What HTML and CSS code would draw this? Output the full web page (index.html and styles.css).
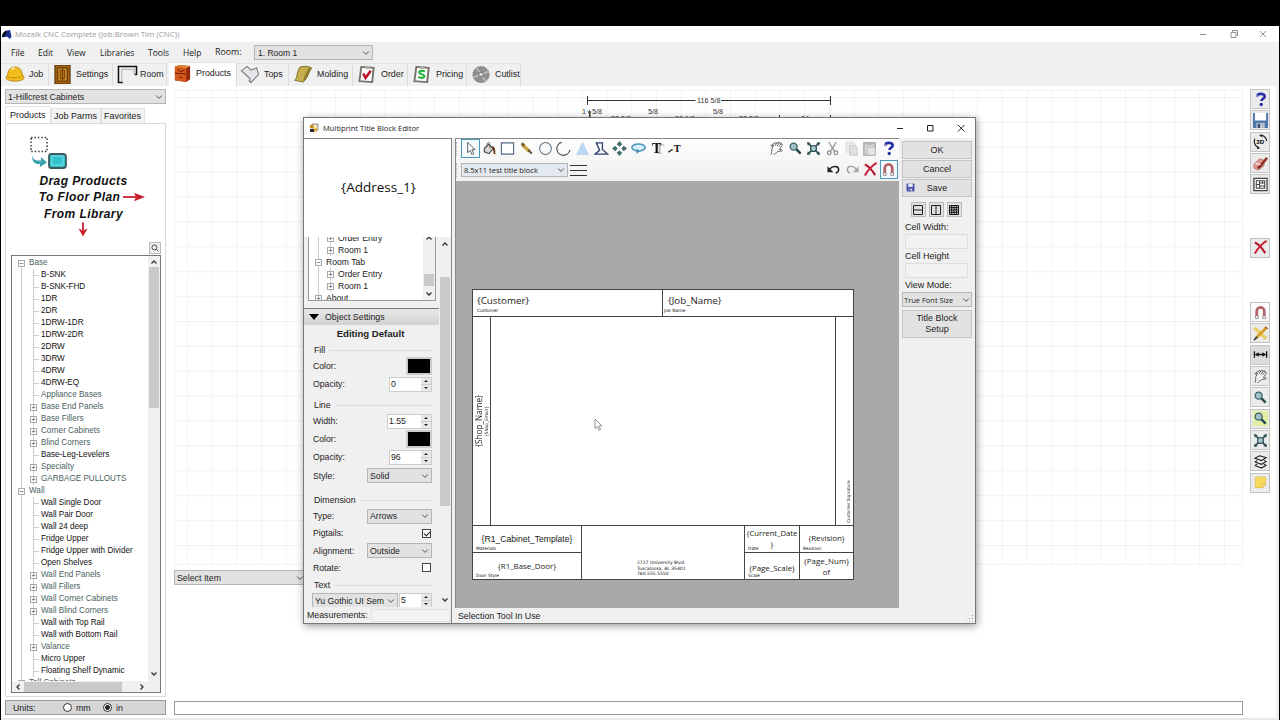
FILE: index.html
```html
<!DOCTYPE html>
<html lang="en">
<head>
    <meta charset="UTF-8">
    <meta name="viewport" content="width=device-width, initial-scale=1.0">
    <title>Mozaik CNC Complete</title>
    <link rel="stylesheet" href="styles.css">
</head>
<body>
    <!-- shared icons -->
    <svg class="defs" width="0" height="0">
        <symbol id="chev" viewBox="0 0 8 8"><path d="M1.2 2.5 4 5.4 6.8 2.5" fill="none" stroke="#555" stroke-width="1"/></symbol>
        <symbol id="arrow" viewBox="0 0 8 8"><path d="M1.5 5.5 4 3 6.5 5.5" fill="none" stroke="#333" stroke-width="1.3"/></symbol>
        <symbol id="help" viewBox="0 0 16 16"><path d="M4.500 4.500C5 2.500 6 2 8 2c3 0 4.500.8 4.500 2.700 0 2.300-3.500 2.300-3.500 4.800" fill="none" stroke="#2b2fa8" stroke-width="2.800"/><path d="M4 5.500 4.500 3" stroke="#8d90e0" stroke-width="2"/><circle cx="8.800" cy="13.300" r="1.800" fill="#2b2fa8"/></symbol>
        <symbol id="magnet" viewBox="0 0 16 16"><path d="M4 14V6.500a4 4 0 0 1 8 0V14" fill="none" stroke="#b5636b" stroke-width="3"/><path d="M2.500 11.500h3v3h-3zM10.500 11.500h3v3h-3z" fill="#f4f4f4" stroke="#777" stroke-width=".7"/></symbol>
        <symbol id="redx" viewBox="0 0 16 16"><path d="M2 2.500C6 4.500 10 9 13 14" fill="none" stroke="#b3162c" stroke-width="2.200"/><path d="M14.500 1C9.500 4 5 9 2 14.500" fill="none" stroke="#c8243a" stroke-width="2.200"/></symbol>
        <symbol id="lens" viewBox="0 0 16 16"><path d="m8.500 8.500 5 5" stroke="#26464d" stroke-width="2.600"/><circle cx="6" cy="6" r="3.700" fill="#9fc3c8" stroke="#3d6169" stroke-width="1.400"/></symbol>
        <symbol id="fit" viewBox="0 0 16 16"><path d="M2 2l12 12M14 2 2 14" stroke="#34545b" stroke-width="1.800"/><path d="M1 1l4 1-3 3zM15 1l-4 1 3 3zM1 15l4-1-3-3zM15 15l-4-1 3-3z" fill="#34545b"/><circle cx="8" cy="8" r="3.200" fill="#a4c5ca" stroke="#34545b" stroke-width="1.300"/></symbol>
        <symbol id="hand" viewBox="0 0 16 16"><path d="M2 14.500C3.500 12 2.500 10 3.200 8L5 4.500 3 5.500c-1 .2-1-.8-.3-1.300L7 1.800c1-.3 1.200.5.6 1L6.500 5M7.600 2.800 9.500 1.500c1-.4 1.400.4.9 1.100L8.500 5.500M10.500 2.600l1.400-.8c1-.2 1.300.7.7 1.300L10.500 6M12.800 3.300c1.200-.5 1.900.5 1.200 1.500L11 9l2.500.3c1.200.6.6 1.600-.5 1.500L9.500 11C8 13 5.500 13.500 5 14.700" fill="#fff" stroke="#444" stroke-width=".9"/></symbol>
        <symbol id="save" viewBox="0 0 16 16"><path d="M1 1h14v14H1z" fill="#4b4fa8"/><path d="M4 1h8v6H4z" fill="#e8eaf8"/><path d="M5 10h6v5H5z" fill="#c7c9e6"/><path d="M6 11h2v4H6z" fill="#33366f"/></symbol>
    </svg>

    <div class="app">
        <div class="titlebar">
            <svg class="logo" viewBox="0 0 12 12"><path d="M2 5 5 2l5-1 .5 3 1 4.500L9.500 11 7 8.500 1 9z" fill="#1d2f91"/><path d="M1 9l1-4 3-3 1.500 1L4 7.500z" fill="#0b0b18"/></svg>
            <span class="title">Mozaik CNC Complete (Job:Brown Tim (CNC))</span>
            <svg class="wc" viewBox="0 0 70 12"><path d="M0 6.500h6M31 4.500h5v5h-5zM32.500 4v-1.500h5v5h-1M60 3l6 6M66 3l-6 6" fill="none" stroke="#888" stroke-width=".9"/></svg>
        </div>

        <div class="menubar">
            <span class="m-file">File</span>
            <span class="m-edit">Edit</span>
            <span class="m-view">View</span>
            <span class="m-lib">Libraries</span>
            <span class="m-tools">Tools</span>
            <span class="m-help">Help</span>
            <span class="m-room">Room:</span>
            <div class="select room-select">1. Room 1<svg><use href="#chev"/></svg></div>
        </div>

        <div class="tabs">
            <div class="tab t-job">
                <svg viewBox="0 0 20 18"><path d="M1 13c0-2 1-2.500 1.500-3C3 4 6 1.500 10 1.500s7 3 7.500 8c1 .5 2 2 1.500 3.500-3 3.500-15 3.500-18 0z" fill="#f2bd1d" stroke="#a8790b" stroke-width=".8"/><path d="M6 4c1-1 3-1.500 4-1" stroke="#fff1a0" stroke-width="1.600" fill="none"/><path d="M2 11c4 2 12 2 16-1" stroke="#c18d10" fill="none"/></svg>
                Job
            </div>
            <div class="tab t-settings">
                <svg viewBox="0 0 18 20"><path d="M1 0h16v20H1z" fill="#a2610f" stroke="#4c2c05"/><path d="M4 3h10v14H4z" fill="#c9861d" stroke="#59340a"/><path d="M7 5.500h4v9H7z" fill="#b8720f" stroke="#6b3d07"/><path d="M9 3v14" stroke="#59340a" stroke-width=".7"/></svg>
                Settings
            </div>
            <div class="tab t-room">
                <svg viewBox="0 0 21 20"><path d="M5.500 18.500H1V1.500h19V10h-2" fill="none" stroke="#111" stroke-width="1.600"/><path d="M4.500 18V4.500h13V10" fill="none" stroke="#aaa" stroke-width="1"/></svg>
                Room
            </div>
            <div class="tab t-products active">
                <svg viewBox="0 0 18 20"><path d="M1 3 5 1l12 1v14l-4 3L1 17z" fill="#8f2b0c"/><path d="M1 3l12 1.500V19L1 17z" fill="#d9571b"/><path d="M1 9.500l12 1.200M4 6l3 2 4-1.500M5 13.500l4 1" stroke="#5d1c06" fill="none"/><path d="M1 3l4-2 12 1-4 2.500z" fill="#e28a3a"/></svg>
                Products
            </div>
            <div class="tab t-tops">
                <svg viewBox="0 0 20 20"><path d="M1 6 7 1.500l4 4L17 3l2 7-8 8.500-2-1.500 1-3z" fill="#e3e5e8" stroke="#777" stroke-width="1.100"/><path d="M1 6.500l8.500 8 1.500 4" fill="none" stroke="#999"/></svg>
                Tops
            </div>
            <div class="tab t-molding">
                <svg viewBox="0 0 20 20"><path d="M7 2c4-1 8-1 12 1-1 3-2 3-3 6s-4 8-6 9L1 16c3-2 2-4 3-7s1-5 3-7z" fill="#c6ae4c" stroke="#6d5c1b" stroke-width=".8"/><path d="M16 3.500c1.500-.3 2.500-.5 3-.5-1 3-2 3-3 6s-4 8-6 9c1-4 1-5 2.500-8S14 6 16 3.500z" fill="#8d792b"/></svg>
                Molding
            </div>
            <div class="tab t-order">
                <svg viewBox="0 0 20 20"><path d="M4 2l13 1-1.500 15L2 17z" fill="#fff" stroke="#77736a" stroke-width="2"/><path d="M8 1h5v3H8z" fill="#aaa"/><path d="M6 9l2.500 4.500L14 6" fill="none" stroke="#b8172d" stroke-width="2.800"/></svg>
                Order
            </div>
            <div class="tab t-pricing">
                <svg viewBox="0 0 20 20"><path d="M4 2l13 1-1.500 15L2 17z" fill="#fff" stroke="#77736a" stroke-width="2"/><path d="M8 1h5v3H8z" fill="#aaa"/><path d="M13 7c-2-1.500-6-1-6 1s6 1.500 5.500 4c-.3 2-4.500 2-6.500.3" fill="none" stroke="#26b03c" stroke-width="2.200"/></svg>
                Pricing
            </div>
            <div class="tab t-cutlist">
                <svg viewBox="0 0 20 20"><circle cx="10" cy="10" r="8.500" fill="#8f8f8f" stroke="#777" stroke-dasharray="2 1"/><path d="M10 10 5 2.500M10 10l8-3M10 10l5 7.500M10 10l-8 3" stroke="#b8b8b8" stroke-width="2"/><circle cx="10" cy="10" r="2.500" fill="#ddd" stroke="#666"/></svg>
                Cutlist
            </div>
        </div>

        <div class="main">
            <div class="sidebar">
                <div class="select lib-select">1-Hillcrest Cabinets<svg><use href="#chev"/></svg></div>
                <div class="subtabs">
                    <span class="on">Products</span>
                    <span>Job Parms</span>
                    <span>Favorites</span>
                </div>
                <div class="tabpage">
                    <div class="drag">
                        <svg class="drag-icon" viewBox="0 0 40 34"><path d="M2 1.500h16v14H2z" fill="none" stroke="#444" stroke-width="1.600" stroke-dasharray="1.600 1.800"/><path d="M3 19c1 5 4 6 9 5.500V21l6 5.500-7 4.500v-3C6 28.500 3 26 3 19z" fill="#3aa3ad"/><path d="M22 18h12q3 0 3 3v8q0 3-3 3H22q-2 0-2-3v-8q0-3 2-3z" fill="#33c3cf" stroke="#3c5b60" stroke-width="1.800"/><path d="M23 20h11v9H23z" fill="none" stroke="#8fe6ec" stroke-width=".8"/></svg>
                        <div class="drag-text">
                            <p>Drag Products</p>
                            <p>To Floor Plan</p>
                            <p>From Library</p>
                        </div>
                        <svg class="arrow-r" viewBox="0 0 22 10"><path d="M0 5h14" stroke="#c8202f" stroke-width="1.800"/><path d="M11 .8 22 5 11 9.200 13 5z" fill="#c8202f"/></svg>
                        <svg class="arrow-d" viewBox="0 0 10 14"><path d="M5 0v8" stroke="#c8202f" stroke-width="1.800"/><path d="M.5 6 5 14 9.500 6 5 8z" fill="#c8202f"/></svg>
                    </div>
                    <div class="search-btn"><svg viewBox="0 0 12 12"><circle cx="5.300" cy="5.300" r="3" fill="none" stroke="#333"/><path d="M7.500 7.500 10 10" stroke="#333"/></svg></div>
                    <div class="treebox">
                        <div class="tree-top">
                            <ul class="tree">
                                <li class="root minus first">Base</li>
                                <li>B-SNK</li>
                                <li>B-SNK-FHD</li>
                                <li>1DR</li>
                                <li>2DR</li>
                                <li>1DRW-1DR</li>
                                <li>1DRW-2DR</li>
                                <li>2DRW</li>
                                <li>3DRW</li>
                                <li>4DRW</li>
                                <li>4DRW-EQ</li>
                                <li class="folder">Appliance Bases</li>
                                <li class="folder plus">Base End Panels</li>
                                <li class="folder plus">Base Fillers</li>
                                <li class="folder plus">Corner Cabinets</li>
                                <li class="folder plus">Blind Corners</li>
                                <li>Base-Leg-Levelers</li>
                                <li class="folder plus">Specialty</li>
                                <li class="folder plus last">GARBAGE PULLOUTS</li>
                                <li class="root minus">Wall</li>
                                <li>Wall Single Door</li>
                                <li>Wall Pair Door</li>
                                <li>Wall 24 deep</li>
                                <li>Fridge Upper</li>
                                <li>Fridge Upper with Divider</li>
                                <li>Open Shelves</li>
                                <li class="folder plus">Wall End Panels</li>
                                <li class="folder plus">Wall Fillers</li>
                                <li class="folder plus">Wall Corner Cabinets</li>
                                <li class="folder plus">Wall Blind Corners</li>
                                <li>Wall with Top Rail</li>
                                <li>Wall with Bottom Rail</li>
                                <li class="folder plus">Valance</li>
                                <li>Micro Upper</li>
                                <li class="last">Floating Shelf Dynamic</li>
                                <li class="root plus">Tall Cabinets</li>
                            </ul>
                            <div class="vscroll">
                                <svg><use href="#arrow"/></svg>
                                <i class="thumb"></i>
                                <svg class="down"><use href="#arrow"/></svg>
                            </div>
                        </div>
                        <div class="hscroll">
                            <svg class="left"><use href="#arrow"/></svg>
                            <i class="thumb"></i>
                            <svg class="right"><use href="#arrow"/></svg>
                        </div>
                    </div>
                </div>
                <div class="units">
                    <span class="u-label">Units:</span>
                    <i class="radio"></i><span class="u-mm">mm</span>
                    <i class="radio checked"></i><span>in</span>
                </div>
            </div>

            <div class="plan">
                <div class="floor">
                    <svg class="dims" viewBox="0 0 260 28">
                        <path d="M7.500 5v9M7.500 9.500h108M141 9.500h109M250.500 5v9M199.500 24v2M250.500 24v2" stroke="#333" fill="none"/>
                        <path d="M8 20l3 7M11 20l-2 7M9.500 19v8" stroke="#333" fill="none" stroke-width=".8"/>
                        <text x="117" y="12">116 5/8</text>
                        <text x="2" y="22.500">1</text>
                        <text x="12" y="22.500">5/8</text>
                        <text x="68" y="22.500">5/8</text>
                        <text x="133" y="22.500">5/8</text>
                        <text x="31" y="29.500">23 5/8</text>
                        <text x="95" y="29.500">28 1/8</text>
                        <text x="159" y="29.500">22 5/8</text>
                        <text x="221" y="29.500">24</text>
                    </svg>
                </div>
                <div class="select item-select">Select Item<svg><use href="#chev"/></svg></div>
                <div class="message-box"></div>
            </div>

            <div class="toolstrip">
                <b><svg><use href="#help"/></svg></b>
                <b><svg viewBox="0 0 16 16"><path d="M0 0h16v16H0z" fill="#4c76ac"/><path d="M2 0h12v8H2z" fill="#fff"/><path d="M3.500 10.500h9V16h-9z" fill="#b6bfca"/><path d="M5 11.500h2.500V16H5z" fill="#334e72"/></svg></b>
                <b><svg viewBox="0 0 16 16"><path d="M2 5a7 7 0 0 0 3 9M9.500 1.500a7 7 0 0 1 5 6" fill="none" stroke="#222" stroke-width="1.300"/><path d="M9.500 0v3.500L6.500 1.500zM7.500 15.500l-3.500.5 1-3.500z" fill="#222"/><text x="3.500" y="10.500" class="t3d">3D</text></svg></b>
                <b><svg viewBox="0 0 16 16"><path d="M1 9l6-6 4 1 1 6-6 5-5-2z" fill="#e19a93" stroke="#a65d57" stroke-width=".7"/><path d="M15 2 7.500 11 5 13" stroke="#8f2f2a" stroke-width="2.600" fill="none"/><path d="M3 8l5 1" stroke="#fff" stroke-width="1.200"/></svg></b>
                <b><svg viewBox="0 0 16 16"><path d="M1 1.500h14v13H1z" fill="#fff" stroke="#444" stroke-width="1.400"/><path d="M3.500 4h9v8h-9zM7 4v8M3.500 8h3.500M7 6.500h5.500M7 9.500h5.500M10 6.500V4" fill="none" stroke="#444" stroke-width="1.100"/></svg></b>
                <b class="far"><svg><use href="#redx"/></svg></b>
                <b class="far magnet"><svg><use href="#magnet"/></svg></b>
                <b><svg viewBox="0 0 16 16"><path d="M1.500 2 14 13.500" stroke="#e3cf62" stroke-width="3.600"/><path d="M14.500 1.500 3 13" stroke="#d99a28" stroke-width="3"/><path d="M4.500 11.500 1 15" stroke="#444" stroke-width="1.800"/><path d="M13 1l2.500 2" stroke="#8a4a2a" stroke-width="1.500"/></svg></b>
                <b class="dark"><svg viewBox="0 0 16 16"><path d="M1.500 4.500v7M14.500 4.500v7M3 8h10" stroke="#111" stroke-width="1.400"/><path d="M2 8l4-2.500v5zM14 8l-4-2.500v5z" fill="#111"/></svg></b>
                <b><svg><use href="#hand"/></svg></b>
                <b><svg><use href="#lens"/></svg></b>
                <b class="yellow"><svg><use href="#lens"/></svg></b>
                <b><svg><use href="#fit"/></svg></b>
                <b><svg viewBox="0 0 16 16"><path d="M2 4.500l5-2.500 7 2-5 3zM2 8.500 4.500 7M2 8.500 9 11l5-3-2.500-1.200M2 12.300l2.500-1.500M2 12.300 9 15l5-3-2.500-1.200" fill="none" stroke="#222" stroke-width="1.100"/></svg></b>
                <b><svg viewBox="0 0 16 16"><path d="M2.500 3q0-1 1-1h9q1 0 1 1v7l-3.500 3.500H3.500q-1 0-1-1z" fill="#f6d95d" stroke="#dcb93a" stroke-width=".7"/><path d="M13.500 10H10v3.500z" fill="#fff1ad" stroke="#c9a52f" stroke-width=".6"/></svg></b>
            </div>
        </div>
    </div>

    <div class="dialog">
        <div class="dlg-title">
            <svg class="form-icon" viewBox="0 0 10 10"><path d="M3 1h6v6H3z" fill="#f7e7b8" stroke="#777" stroke-width=".8"/><path d="M1 2h3.500v3H1z" fill="#c58b19"/><path d="M1 6h4v3H1z" fill="#2e2a28"/><path d="M5 5.500h3v3H5z" fill="#dca22b"/></svg>
            <span>Multiprint Title Block Editor</span>
            <svg class="dlg-wc" viewBox="0 0 70 12"><path d="M0 6.500h6M30.500 3.500h5.500v5.500h-5.500zM61 3l6.500 6.500M67.500 3 61 9.500" fill="none" stroke="#222" stroke-width="1"/></svg>
        </div>
        <div class="dlg-body">
            <div class="left">
                <div class="preview">{Address_1}</div>
                <div class="scroller">
                    <div class="props">
                        <div class="vars">
                            <ul class="tree small">
                                <li class="plus">Order Entry</li>
                                <li class="plus last">Room 1</li>
                                <li class="root minus">Room Tab</li>
                                <li class="plus">Order Entry</li>
                                <li class="plus last">Room 1</li>
                                <li class="root plus">About</li>
                            </ul>
                            <div class="vscroll">
                                <svg><use href="#arrow"/></svg>
                                <i class="thumb"></i>
                                <svg class="down"><use href="#arrow"/></svg>
                            </div>
                        </div>
                        <div class="obj-head"><i></i>Object Settings</div>
                        <div class="obj">
                            <h4>Editing Default</h4>
                            <div class="legend">Fill</div>
                            <div class="row">Color:<i class="swatch"></i></div>
                            <div class="row">Opacity:<div class="spin">0<i></i></div></div>
                            <div class="legend line">Line</div>
                            <div class="row">Width:<div class="spin wide">1.55<i></i></div></div>
                            <div class="row">Color:<i class="swatch"></i></div>
                            <div class="row">Opacity:<div class="spin">96<i></i></div></div>
                            <div class="row">Style:<div class="select">Solid<svg><use href="#chev"/></svg></div></div>
                            <div class="legend dimension">Dimension</div>
                            <div class="row low">Type:<div class="select">Arrows<svg><use href="#chev"/></svg></div></div>
                            <div class="row low">Pigtails:<i class="check on"></i></div>
                            <div class="row low">Alignment:<div class="select">Outside<svg><use href="#chev"/></svg></div></div>
                            <div class="row low">Rotate:<i class="check"></i></div>
                            <div class="legend text">Text</div>
                            <div class="row low font"><div class="select">Yu Gothic UI Sem<svg><use href="#chev"/></svg></div><div class="spin small">5<i></i></div></div>
                        </div>
                    </div>
                    <div class="vscroll outer">
                        <svg><use href="#arrow"/></svg>
                        <i class="thumb"></i>
                        <svg class="down"><use href="#arrow"/></svg>
                    </div>
                </div>
                <div class="measure">Measurements:<i></i></div>
            </div>

            <div class="work">
                <div class="work-top">
                    <div class="editor">
                        <div class="bars">
                            <div class="bar">
                                <i class="grip"></i>
                                <b class="picked"><svg viewBox="0 0 16 16"><path d="M5 1.500v11l2.500-2.500 2 4.500 2-1-2-4.200H13z" fill="#fff" stroke="#555" stroke-width="1"/></svg></b>
                                <b><svg viewBox="0 0 16 16"><path d="M2.500 8 7 3.500l5 4.500-4.500 5.500-5-2z" fill="#d9d9d9" stroke="#444" stroke-width="1.200"/><path d="M5.500 6V2.500q1.500-2 3 0V8" fill="none" stroke="#666"/><path d="M10.500 5.500c3 0 3.700 2 3.700 6v3l-2-1c0-3 0-4-1.500-5z" fill="#6d4428"/></svg></b>
                                <b><svg viewBox="0 0 16 16"><path d="M1.500 2h13v12h-13z" fill="#fff" stroke="#536b86" stroke-width="1.200"/></svg></b>
                                <b><svg viewBox="0 0 16 16"><path d="M3.500 4 11 11" stroke="#c9a13d" stroke-width="3.600"/><path d="M10 9.500l3.500 4" stroke="#5c4930" stroke-width="2.200"/><path d="M3 2.500l2.500 2.500" stroke="#735e2c" stroke-width="3"/></svg></b>
                                <b><svg viewBox="0 0 16 16"><circle cx="8" cy="8" r="6.300" fill="none" stroke="#61727f" stroke-width="1.100"/></svg></b>
                                <b><svg viewBox="0 0 16 16"><path d="M6 1.500a7 7 0 1 0 8.800 8" fill="none" stroke="#4b5055" stroke-width="1.300"/></svg></b>
                                <b><svg viewBox="0 0 16 16"><path d="M8 .5 15 15H1z" fill="#bcd7f2"/></svg></b>
                                <b><svg viewBox="0 0 16 16"><path d="M2.500 2H9v7l5.500 5H1l5-4z" fill="none" stroke="#2c4468" stroke-width="1.400"/></svg></b>
                                <b><svg viewBox="0 0 16 16"><path d="M8 0l3 3.500L8 6 5 3.500zM8 16l3-3.500L8 10l-3 2.500zM0 8l3.500-3L6 8l-2.500 3zM16 8l-3.500-3L10 8l2.500 3z" fill="#466d6c"/></svg></b>
                                <b><svg viewBox="0 0 16 16"><ellipse cx="8" cy="7" rx="7" ry="3.800" fill="#d8edf6" stroke="#5199bd" stroke-width="1.800"/><path d="M6 8l3 3-3 3z" fill="#4189ad"/></svg></b>
                                <b><svg viewBox="0 0 16 16"><text x="2" y="13" class="tt shade">T</text></svg></b>
                                <b><svg viewBox="0 0 16 16"><path d="M0 12 5 9" stroke="#333" stroke-width="1.500"/><text x="6" y="12" class="tt mini">T</text></svg></b>
                                <span class="fill"></span>
                                <b><svg><use href="#hand"/></svg></b>
                                <b><svg><use href="#lens"/></svg></b>
                                <b><svg><use href="#fit"/></svg></b>
                                <b><svg viewBox="0 0 16 16"><path d="M4 1l6 10M12 1 6 11" stroke="#888" stroke-width="1.200"/><circle cx="4.500" cy="12.500" r="2" fill="none" stroke="#888" stroke-width="1.200"/><circle cx="11.500" cy="12.500" r="2" fill="none" stroke="#888" stroke-width="1.200"/></svg></b>
                                <b><svg viewBox="0 0 16 16"><path d="M2 1h8l2 2v9H2z" fill="#e9e9e9" stroke="#dedede"/><path d="M6 5h6l2 2v8H6z" fill="#e0e0e0" stroke="#c8c8c8"/></svg></b>
                                <b><svg viewBox="0 0 16 16"><path d="M2 2h12v13H2z" fill="#d3d3d3" stroke="#a5a5a5" stroke-width="1.400"/><path d="M5 1h6v3H5z" fill="#b5b5b5"/><path d="M6 7h8v8H6z" fill="#e6e6e6" stroke="#bbb" stroke-width=".7"/></svg></b>
                                <b><svg><use href="#help"/></svg></b>
                            </div>
                            <div class="bar second">
                                <i class="grip"></i>
                                <div class="select block-select">8.5x11 test title block<svg><use href="#chev"/></svg></div>
                                <svg class="burger" viewBox="0 0 17 14"><path d="M0 2.500h17M0 7.500h17M0 12.500h17" stroke="#333" stroke-width="1.200"/></svg>
                                <span class="fill"></span>
                                <b><svg viewBox="0 0 16 16"><path d="M4 7.500c3-4 9.500-3.500 9.500.5 0 2-1 3-3 4" fill="none" stroke="#222" stroke-width="1.600"/><path d="M1.500 4.500v6.500H8z" fill="#222"/></svg></b>
                                <b><svg viewBox="0 0 16 16"><path d="M12 7.500C9 3.500 2.500 4 2.500 8c0 2 1 3 3 4" fill="none" stroke="#999" stroke-width="1.400"/><path d="M14.500 4.500v6.500H8z" fill="#aaa"/></svg></b>
                                <b><svg><use href="#redx"/></svg></b>
                                <b class="picked"><svg><use href="#magnet"/></svg></b>
                            </div>
                        </div>
                        <div class="stage">
                            <div class="sheet">
                                <div class="s-head">
                                    <div class="customer"><span>{Customer}</span><small>Customer</small></div>
                                    <div class="job"><span>{Job_Name}</span><small>Job Name</small></div>
                                </div>
                                <div class="s-mid">
                                    <div class="shop"><span>{Shop_Name}</span><small>{Shop_Email}</small></div>
                                    <div class="draw"></div>
                                    <div class="sign"><small>Customer Signature</small></div>
                                </div>
                                <div class="s-foot">
                                    <div class="c mat"><span>{R1_Cabinet_Template}</span><small>Materials</small></div>
                                    <div class="c addr">2727 University Blvd.<br>Tuscaloosa, AL 35401<br>760.555.5550</div>
                                    <div class="c date"><span>{Current_Date<br>}</span><small>Date</small></div>
                                    <div class="c rev"><span>{Revision}</span><small>Revision</small></div>
                                    <div class="c door"><span>{R1_Base_Door}</span><small>Door Style</small></div>
                                    <div class="c scale"><span>{Page_Scale}</span><small>Scale</small></div>
                                    <div class="c num"><span>{Page_Num}<br>of</span></div>
                                </div>
                            </div>
                            <svg class="cursor" viewBox="0 0 9 13"><path d="M1 1v9.500L3.200 8.500 5 12.300l1.500-.8L4.900 8H8z" fill="#fff" stroke="#777" stroke-width=".8"/></svg>
                        </div>
                    </div>
                    <div class="actions">
                        <button>OK</button>
                        <button>Cancel</button>
                        <button class="save"><svg><use href="#save"/></svg>Save</button>
                        <div class="cells">
                            <b><svg viewBox="0 0 12 12"><path d="M1.500 1.500h9v9h-9zM1.500 6h9" fill="none" stroke="#222"/></svg></b>
                            <b><svg viewBox="0 0 12 12"><path d="M1.500 1.500h9v9h-9zM6 1.500v9" fill="none" stroke="#222"/></svg></b>
                            <b><svg viewBox="0 0 12 12"><path d="M1.500 1.500h9v9h-9zM3.700 1v10M6 1v10M8.300 1v10M1 3.700h10M1 6h10M1 8.300h10" fill="none" stroke="#111"/></svg></b>
                        </div>
                        <label>Cell Width:</label>
                        <i class="field"></i>
                        <label>Cell Height</label>
                        <i class="field"></i>
                        <label class="vm">View Mode:</label>
                        <div class="select mode">True Font Size<svg><use href="#chev"/></svg></div>
                        <button class="setup">Title Block<br>Setup</button>
                    </div>
                </div>
                <div class="status">Selection Tool In Use<i></i></div>
            </div>
        </div>
    </div>
</body>
</html>
```
FILE: styles.css
```css
*, *::before, *::after {
    box-sizing: border-box;
}
body {
    margin: 0;
    width: 1280px;
    height: 720px;
    overflow: hidden;
    background: black;
    font-family: "Liberation Sans", Arial, sans-serif;
    font-size: 8.8px;
    color: #222;
    white-space: nowrap;
}
.defs {
    position: absolute;
}
p, ul, h4 {
    margin: 0;
    padding: 0;
}
i {
    font-style: normal;
}
.app {
    margin: 26px 1px 0 1px;
    height: 694px;
    background: white;
    display: flex;
    flex-direction: column;
}

/* title and menu */
.titlebar {
    height: 16px;
    display: flex;
    align-items: center;
    font-family: "Open Sans", sans-serif;
    font-size: 7.9px;
    color: #999;
}
.logo {
    width: 11px;
    height: 11px;
    margin: 0 3px 0 0;
}
.wc {
    width: 70px;
    height: 12px;
    margin-left: auto;
    margin-right: 9px;
}
.menubar {
    height: 20px;
    background: #f0f0f0;
    display: flex;
    align-items: center;
    padding-left: 10px;
    font-family: "Open Sans", sans-serif;
    font-size: 8.5px;
}
.m-file { width: 27px; }
.m-edit { width: 29px; }
.m-view { width: 33px; }
.m-lib { width: 48px; }
.m-tools { width: 35px; }
.m-help { width: 32px; }
.m-room { width: 39px; font-size: 8.8px; }
.select {
    height: 15px;
    background: #e2e2e2;
    border: 1px solid #b5b5b5;
    display: flex;
    align-items: center;
    justify-content: space-between;
    padding: 0 2px;
}
.select svg {
    width: 8px;
    height: 8px;
    flex: none;
}
.room-select {
    width: 119px;
    margin-top: 1px;
    padding-left: 3px;
    font-family: "Liberation Sans", sans-serif;
}

/* main tabs */
.tabs {
    height: 24px;
    background: #f0f0f0;
    display: flex;
    align-items: flex-end;
    font-size: 8.9px;
}
.tab {
    height: 23px;
    border-right: 1px solid #dcdcdc;
    border-top: 1px solid #e4e4e4;
    display: flex;
    align-items: center;
    padding: 0 0 2px 4px;
}
.tab svg {
    width: 20px;
    height: 19px;
    margin-right: 4px;
}
.t-job { width: 48px; }
.t-settings { width: 64px; }
.t-room { width: 54px; margin-right: 2px; }
.t-room svg { width: 21px; margin-right: 2px; }
.t-products { width: 68px; }
.t-tops { width: 52px; padding-left: 3px; }
.t-molding { width: 64px; }
.t-order { width: 55px; }
.t-pricing { width: 59px; }
.t-cutlist { width: 54px; }
.t-settings svg, .t-products svg { width: 19px; }
.tab.active {
    height: 24px;
    background: white;
    padding-bottom: 3px;
}

.main {
    flex: 1;
    display: flex;
    background: white;
    border-right: 3px solid #f0f0f0;
    border-bottom: 2px solid #e9e9e9;
}

/* library side */
.sidebar {
    width: 165px;
    padding: 3px 0 0 4px;
    display: flex;
    flex-direction: column;
}
.lib-select {
    width: 161px;
}
.subtabs {
    display: flex;
    align-items: flex-end;
    height: 19px;
    font-size: 9px;
}
.subtabs span {
    height: 15px;
    line-height: 15px;
    padding: 0 2.5px;
    background: #f3f3f3;
    border: 1px solid #e2e2e2;
    border-bottom: 0;
}
.subtabs .on {
    background: white;
    height: 17px;
    line-height: 17px;
    padding: 0 4px;
    margin-left: 0;
}
.tabpage {
    width: 161px;
    height: 574px;
    border: 1px solid #dadada;
    padding: 0 4px 0 5px;
}
.drag {
    position: relative;
    height: 118px;
}
.drag-icon {
    position: absolute;
    left: 18px;
    top: 12px;
    width: 40px;
    height: 34px;
}
.drag-text {
    padding-top: 49px;
    width: 145px;
    text-align: center;
    font-weight: bold;
    font-style: italic;
    font-size: 12px;
    line-height: 16.3px;
    letter-spacing: 0.42px;
    color: #111;
}
.drag-text p:nth-child(2) {
    margin-left: -8px;
}
.arrow-r {
    position: absolute;
    left: 112px;
    top: 68px;
    width: 22px;
    height: 10px;
}
.arrow-d {
    position: absolute;
    left: 67px;
    top: 98px;
    width: 10px;
    height: 15px;
}
.search-btn {
    width: 12px;
    height: 12px;
    margin-left: 138px;
    border: 1px solid #bbb;
    background: #eee;
}
.search-btn svg {
    display: block;
    width: 10px;
    height: 10px;
}
.treebox {
    width: 150px;
    height: 438px;
    margin-top: 1px;
    border: 1px solid #777;
}
.tree-top {
    display: flex;
    height: 425px;
    overflow: hidden;
}
.tree {
    flex: 1;
    list-style: none;
    overflow: hidden;
    font-size: 8.15px;
    line-height: 12px;
    color: #111;
    padding-top: 1px;
}
.tree li {
    height: 12px;
    padding-left: 29px;
    position: relative;
}
.tree li.folder {
    color: #4a5f5f;
}
.tree li.root {
    padding-left: 17px;
    color: #4a5f5f;
}
/* dotted guides */
.tree li::before {
    content: "";
    position: absolute;
    left: 9px;
    top: 0;
    width: 13px;
    height: 12px;
    border-left: 1px solid #ccc;
    border-right: 1px solid #ccc;
}
.tree li.root::before {
    border-right: 0;
}
.tree li.first::before {
    top: 6px;
    height: 6px;
}
.tree li::after {
    content: "";
    position: absolute;
    left: 21px;
    top: 6px;
    width: 6px;
    height: 1px;
    background: #ccc;
}
.tree li.plus::after, .tree li.minus::after {
    content: "+";
    left: 18px;
    top: 3px;
    width: 7px;
    height: 7px;
    background: white;
    border: 1px solid #aaa;
    font-size: 7px;
    line-height: 5px;
    text-align: center;
    color: #333;
}
.tree li.root::after {
    left: 6px;
}
.tree li.minus::after {
    content: "–";
    line-height: 4px;
}
.vscroll {
    width: 12px;
    background: #f0f0f0;
    display: flex;
    flex-direction: column;
    align-items: center;
}
.vscroll svg, .hscroll svg {
    width: 8px;
    height: 8px;
    flex: none;
}
.thumb {
    background: #c9c9c9;
}
.down {
    transform: rotate(180deg);
    margin-top: auto;
}
.tree-top .vscroll svg {
    margin-top: 2px;
}
.tree-top .vscroll .thumb {
    width: 10px;
    height: 141px;
    margin-top: 1px;
}
.tree-top .vscroll .down {
    margin-top: auto;
    margin-bottom: 3px;
}
.hscroll {
    height: 11px;
    background: #f0f0f0;
    display: flex;
    align-items: center;
    padding-left: 2px;
}
.hscroll .thumb {
    width: 98px;
    height: 10px;
    margin-left: 2px;
}
.hscroll .left {
    transform: rotate(-90deg);
}
.hscroll .right {
    transform: rotate(90deg);
    margin-left: 16px;
}
.units {
    width: 161px;
    height: 15px;
    margin-top: 3px;
    background: #d6d6d6;
    border: 1px solid #999;
    display: flex;
    align-items: center;
    padding-left: 7px;
}
.u-label { width: 50px; }
.u-mm { width: 27px; }
.radio {
    width: 9px;
    height: 9px;
    border: 1px solid #333;
    border-radius: 50%;
    background: white;
    margin-right: 4px;
}
.radio.checked {
    background: radial-gradient(#222 0 2px, white 2.8px);
}

/* floor plan */
.plan {
    width: 1069px;
    margin-left: 8px;
    padding-top: 4px;
    display: flex;
    flex-direction: column;
}
.floor {
    position: relative;
    height: 475px;
    border: 1px solid #f3f3f3;
    background-image:
        linear-gradient(#f3f3f3 1px, transparent 1px),
        linear-gradient(90deg, #f3f3f3 1px, transparent 1px);
    background-size: 24.7px 24.9px;
    background-position: 12px 6px;
}
.dims {
    position: absolute;
    left: 405px;
    top: 0;
    width: 260px;
    height: 28px;
    font-size: 7.2px;
    fill: #333;
}
.item-select {
    width: 133px;
    height: 15px;
    margin-top: 5px;
}
.message-box {
    height: 14px;
    margin-top: 116px;
    border: 1px solid #999;
}
.toolstrip {
    margin-left: 7px;
    padding-top: 3px;
    width: 20px;
    display: flex;
    flex-direction: column;
    gap: 1.35px;
}
.toolstrip b {
    width: 20px;
    height: 20px;
    background: #ebebeb;
    border: 1px solid #c3c3c3;
    display: flex;
    align-items: center;
    justify-content: center;
    flex: none;
}
.toolstrip svg {
    width: 15px;
    height: 15px;
}
.toolstrip .far { margin-top: 42px; }
.toolstrip .magnet { margin-top: 43px; background: #fafafa; }
.toolstrip .dark { background: #dcdcdc; }
.toolstrip .yellow svg { background: #dff0a4; }
.t3d {
    font-size: 6.5px;
    font-weight: bold;
}

/* editor window */
.dialog {
    position: absolute;
    left: 303px;
    top: 117px;
    width: 673px;
    height: 507px;
    background: #f0f0f0;
    border: 1px solid #777;
    box-shadow: 1px 2px 8px rgba(0, 0, 0, 0.4);
    display: flex;
    flex-direction: column;
}
.dlg-title {
    height: 20px;
    background: white;
    display: flex;
    align-items: center;
    padding-left: 5px;
    font-family: "Open Sans", sans-serif;
    font-size: 7.6px;
}
.form-icon {
    width: 10px;
    height: 10px;
    margin-right: 4px;
}
.dlg-wc {
    width: 70px;
    height: 12px;
    margin-left: auto;
    margin-right: 8px;
}
.dlg-body {
    flex: 1;
    display: flex;
    gap: 3px;
}
.dlg-body .left {
    width: 148px;
    border: 1px solid #888;
    border-left: 0;
    border-bottom: 0;
    display: flex;
    flex-direction: column;
}
.preview {
    height: 98px;
    background: white;
    text-align: center;
    line-height: 97px;
    padding-left: 2px;
    font-family: "Open Sans", sans-serif;
    font-size: 13.5px;
    color: #111;
}
.scroller {
    height: 370px;
    display: flex;
    overflow: hidden;
}
.props {
    width: 135px;
}
.vars {
    width: 128px;
    height: 64px;
    margin-left: 4px;
    background: white;
    border: 1px solid #999;
    border-top: 0;
    display: flex;
    overflow: hidden;
}
.small.tree {
    font-size: 8.6px;
    padding-top: 0;
    margin-top: -5.5px;
    height: 72px;
    color: #222;
}
.small.tree li.root {
    color: #222;
}
.vars .vscroll .thumb {
    width: 10px;
    height: 12px;
    margin-top: 32px;
}
.vars .vscroll svg:first-child { margin-top: -3px; }
.vars .down { margin-bottom: 2px; }
.obj-head {
    height: 17px;
    margin-top: 7px;
    border-top: 1px solid #777;
    background: linear-gradient(#e8e8e8, #d2d2d2);
    display: flex;
    align-items: center;
}
.obj-head i {
    border: 5px solid transparent;
    border-top: 6px solid black;
    border-bottom: 0;
    margin: 0 6px 0 5px;
}
.obj {
    padding: 0 7px 0 9px;
}
.obj h4 {
    height: 18px;
    line-height: 18px;
    padding-right: 4px;
    font-size: 9.6px;
    text-align: center;
}
.legend {
    height: 14px;
    line-height: 13px;
    padding-left: 1px;
    display: flex;
    align-items: center;
    gap: 4px;
}
.legend::after {
    content: "";
    flex: 1;
    height: 1px;
    background: #ddd;
}
.legend.line { margin-top: 5px; }
.legend.dimension { margin-top: 9px; }
.legend.text { margin-top: 2px; }
.row {
    height: 18.1px;
    display: flex;
    align-items: center;
    justify-content: space-between;
    font-size: 8.7px;
}
.row.low { height: 17.2px; }
.row .select {
    width: 65px;
    height: 15px;
}
.row.font .select { width: 86px; margin-left: -1px; }
.swatch {
    width: 26px;
    height: 18px;
    background: black;
    border: 2px solid #ccc;
}
.spin {
    width: 43px;
    height: 15px;
    background: white;
    border: 1px solid #ccc;
    padding-left: 1px;
    line-height: 12px;
    position: relative;
}
.spin.wide { width: 45px; }
.spin.small { width: 33px; }
.spin i {
    position: absolute;
    right: 0;
    top: 0;
    width: 10px;
    height: 13px;
    background: linear-gradient(#e8e8e8 6px, #ccc 6px 7px, #e8e8e8 7px);
}
.spin i::before, .spin i::after {
    content: "";
    position: absolute;
    left: 3px;
    top: 2px;
    border: 2px solid transparent;
    border-bottom: 2px solid #222;
    border-top: 0;
}
.spin i::after {
    top: 9px;
    border: 2px solid transparent;
    border-top: 2px solid #222;
    border-bottom: 0;
}
.check {
    width: 9px;
    height: 9px;
    background: white;
    border: 1px solid #444;
    margin-right: 1px;
}
.check.on::after {
    content: "";
    display: block;
    width: 6px;
    height: 4px;
    margin: 1px 0 0 1px;
    border-left: 1px solid #222;
    border-bottom: 1px solid #222;
    transform: rotate(-45deg);
}
.vscroll.outer {
    width: 12px;
}
.outer svg { margin-top: 3px; }
.outer .thumb {
    width: 10px;
    height: 229px;
    margin-top: 29px;
}
.outer .down { margin-top: auto; margin-bottom: 3px; }
.measure {
    flex: 1;
    display: flex;
    align-items: center;
    padding-left: 3px;
}
.measure i {
    flex: 1;
    height: 13px;
    margin-left: 3px;
    border: 1px solid #e0e0e0;
    background: #f3f3f3;
}

.work {
    flex: 1;
    display: flex;
    flex-direction: column;
}
.work-top {
    height: 470px;
    display: flex;
}
.editor {
    width: 444px;
    border-left: 1px solid #888;
    border-top: 1px solid #888;
}
.bars {
    height: 42px;
    background: linear-gradient(#fdfdfd, #f0f0f0);
    padding-right: 1px;
}
.bar {
    height: 19px;
    display: flex;
    align-items: center;
}
.bar.second {
    height: 23px;
}
.grip {
    width: 3px;
    height: 14px;
    margin-right: 2px;
    border-left: 1px dotted #aaa;
}
.bar b {
    width: 18.7px;
    height: 19px;
    display: flex;
    align-items: center;
    justify-content: center;
}
.bar b svg {
    width: 15px;
    height: 15px;
}
.bar .picked {
    border: 1px solid #4b98bd;
    background: #f4fafd;
}
.bar .fill {
    flex: 1;
}
.second b {
    width: 18.4px;
}
.tt {
    font: bold 15px "Liberation Serif", serif;
    fill: #111;
}
.tt.shade { filter: drop-shadow(3px 1px 0 #bbb); }
.tt.mini { font-size: 11px; }
.block-select {
    width: 107px;
    height: 14px;
    background: #e3e9ee;
    font-family: "Open Sans", sans-serif;
    font-size: 7.5px;
}
.burger {
    width: 17px;
    height: 14px;
    margin-left: 2px;
}
.stage {
    position: relative;
    height: 427px;
    background: #a9a9a9;
    padding: 108px 0 0 16px;
}
.cursor {
    position: absolute;
    left: 138px;
    top: 237px;
    width: 9px;
    height: 13px;
}

/* title block sheet */
.sheet {
    width: 382px;
    height: 291px;
    background: white;
    border: 1px solid #444;
    font-family: "Open Sans", sans-serif;
    color: #222;
}
.sheet small {
    font: 4.4px "DejaVu Sans", sans-serif;
    color: #111;
}
.s-head {
    height: 27px;
    display: flex;
    border-bottom: 1px solid #444;
    font-size: 9.8px;
}
.s-head div {
    padding: 4px 0 0 4px;
    display: flex;
    flex-direction: column;
    line-height: 14px;
}
.s-head small {
    line-height: 5px;
}
.customer {
    width: 190px;
    border-right: 1px solid #444;
}
.job span { margin-left: 1px; }
.s-head .job small { margin-left: -3px; }
.s-mid {
    height: 209px;
    display: flex;
    justify-content: space-between;
    border-bottom: 1px solid #444;
}
.shop, .sign {
    writing-mode: vertical-rl;
    transform: rotate(180deg);
    width: 18px;
    border-left: 1px solid #444;
}
.shop {
    display: flex;
    flex-direction: column;
    align-items: center;
    font-size: 8.2px;
    line-height: 10px;
    padding-right: 1px;
}
.shop small { line-height: 6px; }
.sign {
    display: flex;
    flex-direction: column;
    justify-content: flex-end;
    border-left: 0;
    border-right: 1px solid #444;
    padding: 2px 0 0 1px;
}
.sheet .sign small {
    font-size: 4.25px;
    line-height: 7px;
}
.s-foot {
    height: 53px;
    display: grid;
    grid-template-columns: 109px 163px 55px 53px;
    grid-template-rows: 27px 26px;
}
.c {
    text-align: center;
    border-right: 1px solid #444;
    font-size: 7.9px;
    line-height: 10.5px;
    position: relative;
}
.c small {
    position: absolute;
    left: 3px;
    bottom: 1px;
    line-height: 5px;
}
.mat, .date, .rev { border-bottom: 1px solid #444; }
.rev, .num { border-right: 0; }
.mat {
    font-size: 8.6px;
    padding-top: 8px;
    font-family: "Liberation Sans", sans-serif;
}
.door { padding-top: 8px; }
.addr {
    grid-row: span 2;
    padding: 34px 0 0 55px;
    text-align: left;
    font: 4.5px/5.5px "DejaVu Sans", sans-serif;
    color: #111;
}
.date { padding-top: 2px; font-size: 7.7px; }
.rev { padding-top: 7px; }
.scale { padding-top: 10px; }
.num { padding-top: 3px; }

/* right column of the window */
.actions {
    flex: 1;
    padding: 3px 3px 0 3px;
    display: flex;
    flex-direction: column;
}
button {
    height: 18px;
    margin: 0 0 1px 0;
    padding: 0;
    background: #e2e2e2;
    border: 1px solid #c4c4c4;
    font-family: inherit;
    font-size: 9px;
    color: #222;
    position: relative;
}
.save svg {
    position: absolute;
    left: 3px;
    top: 3px;
    width: 9px;
    height: 9px;
}
.cells {
    display: flex;
    justify-content: center;
    gap: 3px;
    margin: 4px 0 3px -2px;
}
.cells b {
    width: 15px;
    height: 15px;
    background: #e1e1e1;
    border: 1px solid #bbb;
    display: flex;
    align-items: center;
    justify-content: center;
}
.cells svg {
    width: 12px;
    height: 12px;
}
label {
    height: 14px;
    line-height: 14px;
    padding-left: 3px;
    font-size: 9px;
}
.field {
    height: 15px;
    margin: 0 4px 0 3px;
    border: 1px solid #ddd;
    background: #f2f2f2;
}
.mode {
    height: 15px;
    padding: 0 1px;
    font-family: "Open Sans", sans-serif;
    font-size: 7.5px;
}
.setup {
    height: 28px;
    margin-top: 3px;
    line-height: 11px;
}
.status {
    flex: 1;
    display: flex;
    align-items: center;
    justify-content: space-between;
    padding: 0 2px 0 3px;
}
.status i {
    width: 8px;
    height: 8px;
    margin-top: 4px;
    background: radial-gradient(#999 0.8px, transparent 1px) 0 0 / 3px 3px;
    clip-path: polygon(100% 0, 100% 100%, 0 100%);
}
```
